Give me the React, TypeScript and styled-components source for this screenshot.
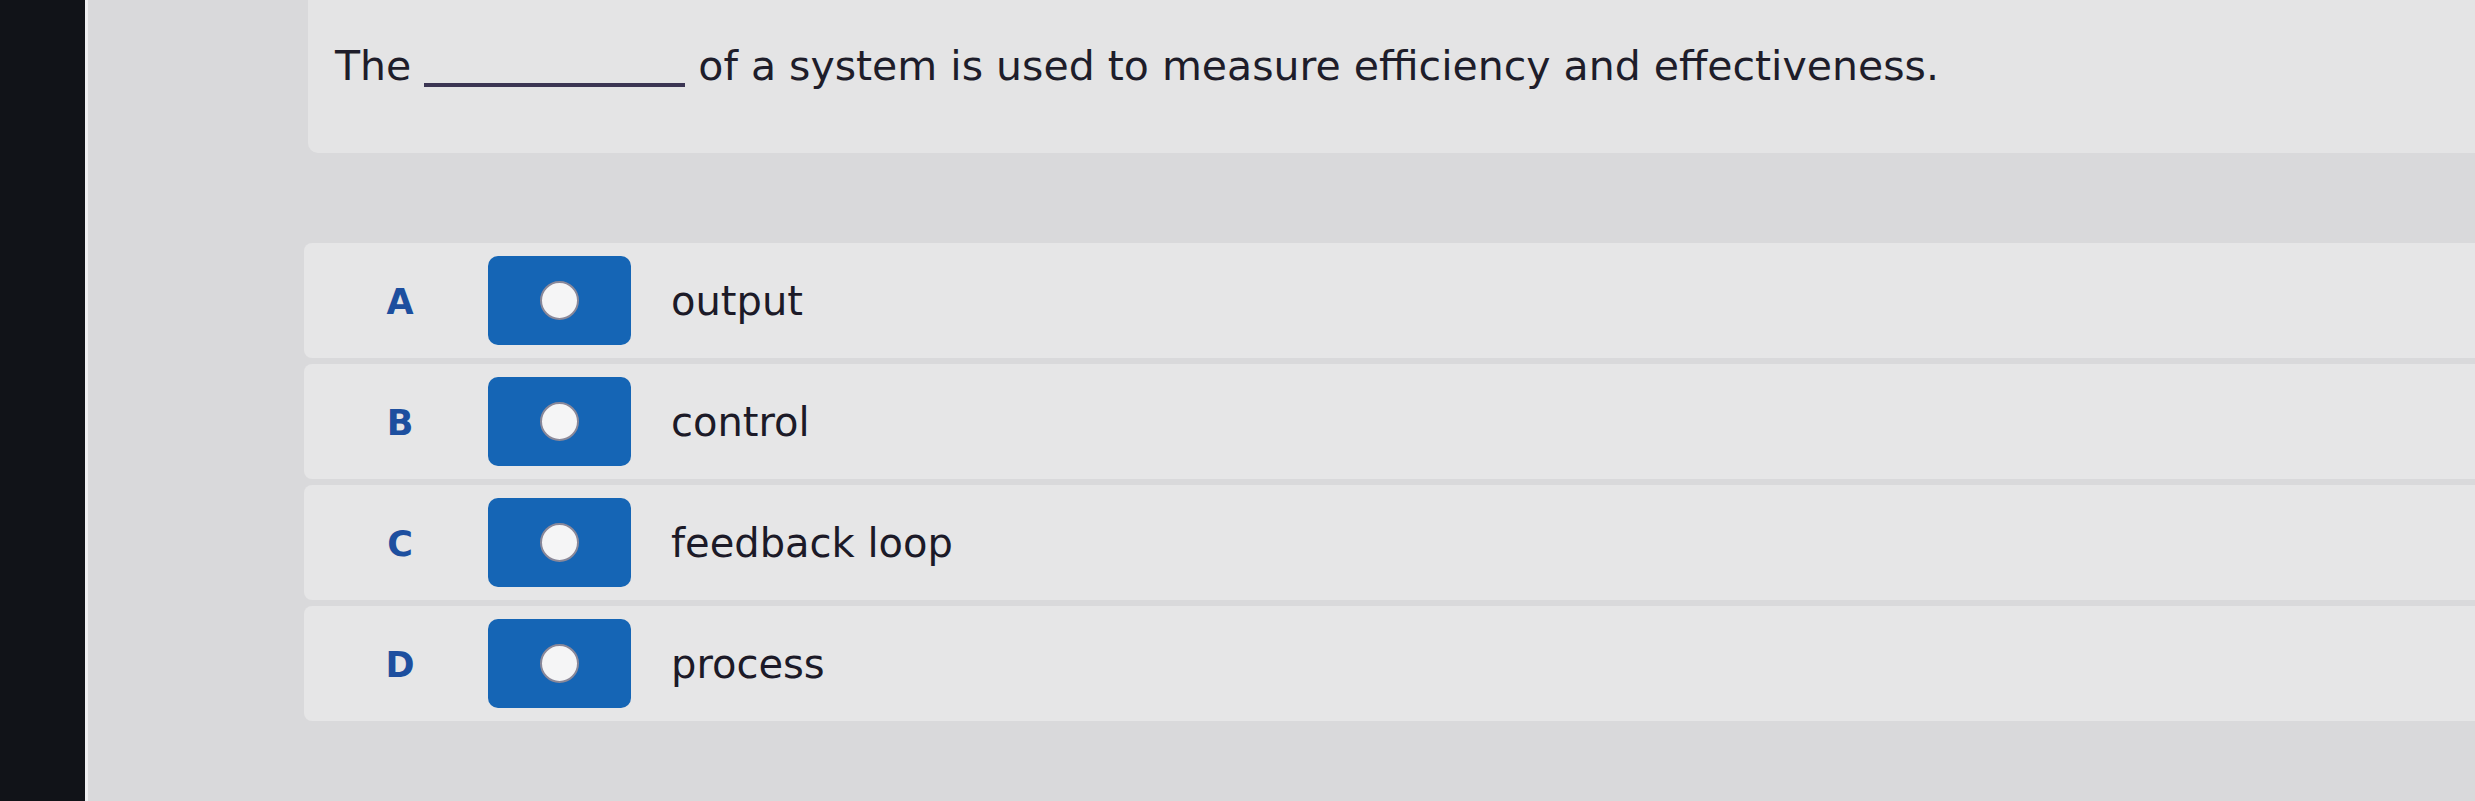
import React from 'react';
import styled, { createGlobalStyle } from 'styled-components';

const GlobalStyle = createGlobalStyle`
  html, body {
    margin: 0;
    padding: 0;
    width: 2475px;
    height: 801px;
    overflow: hidden;
    background: #d9d9db;
    font-family: "DejaVu Sans", Verdana, sans-serif;
  }
`;

const Screen = styled.div`
  display: flex;
  width: 2475px;
  height: 801px;
`;

const Bezel = styled.div`
  width: 85px;
  flex-shrink: 0;
  background: #111318;
  border-right: 3px solid #eeeef0;
`;

const Content = styled.div`
  flex: 1;
  display: flex;
  flex-direction: column;
  padding-left: 216px;
`;

const QuestionPanel = styled.div`
  height: 153px;
  margin-left: 4px;
  padding: 42px 0 0 27px;
  box-sizing: border-box;
  background: #e4e4e5;
  border-radius: 0 0 0 10px;
  color: #1e1d2a;
  font-size: 41px;
  line-height: 48px;
  white-space: nowrap;
`;

const Blank = styled.span`
  display: inline-block;
  width: 261px;
  height: 0;
  border-bottom: 4px solid #3b3553;
  vertical-align: -7px;
`;

const Choices = styled.div`
  display: flex;
  flex-direction: column;
  gap: 6px;
  margin-top: 90px;
`;

const ChoiceRow = styled.div`
  display: flex;
  align-items: center;
  height: 115px;
  background: #e6e6e7;
  border-radius: 8px 0 0 8px;
`;

const Letter = styled.div`
  width: 184px;
  padding: 2px 0 0 8px;
  box-sizing: border-box;
  text-align: center;
  color: #1d4f9f;
  font-size: 35px;
  font-weight: bold;
`;

const RadioButton = styled.div`
  width: 143px;
  height: 89px;
  flex-shrink: 0;
  display: flex;
  align-items: center;
  justify-content: center;
  background: #1565b5;
  border-radius: 10px;
`;

const RadioDot = styled.div`
  width: 35px;
  height: 35px;
  border-radius: 50%;
  background: #f5f5f6;
  border: 2px solid #8a8899;
`;

const AnswerText = styled.div`
  margin-left: 40px;
  color: #1c1a28;
  font-size: 40px;
`;

const choices = [
  { letter: 'A', text: 'output' },
  { letter: 'B', text: 'control' },
  { letter: 'C', text: 'feedback loop' },
  { letter: 'D', text: 'process' },
];

const App: React.FC = () => {
  return (
    <>
      <GlobalStyle />
      <Screen>
        <Bezel />
        <Content>
          <QuestionPanel>
            The <Blank /> of a system is used to measure efficiency and effectiveness.
          </QuestionPanel>
          <Choices>
            {choices.map(choice => (
              <ChoiceRow key={choice.letter}>
                <Letter>{choice.letter}</Letter>
                <RadioButton>
                  <RadioDot />
                </RadioButton>
                <AnswerText>{choice.text}</AnswerText>
              </ChoiceRow>
            ))}
          </Choices>
        </Content>
      </Screen>
    </>
  );
};

export default App;
